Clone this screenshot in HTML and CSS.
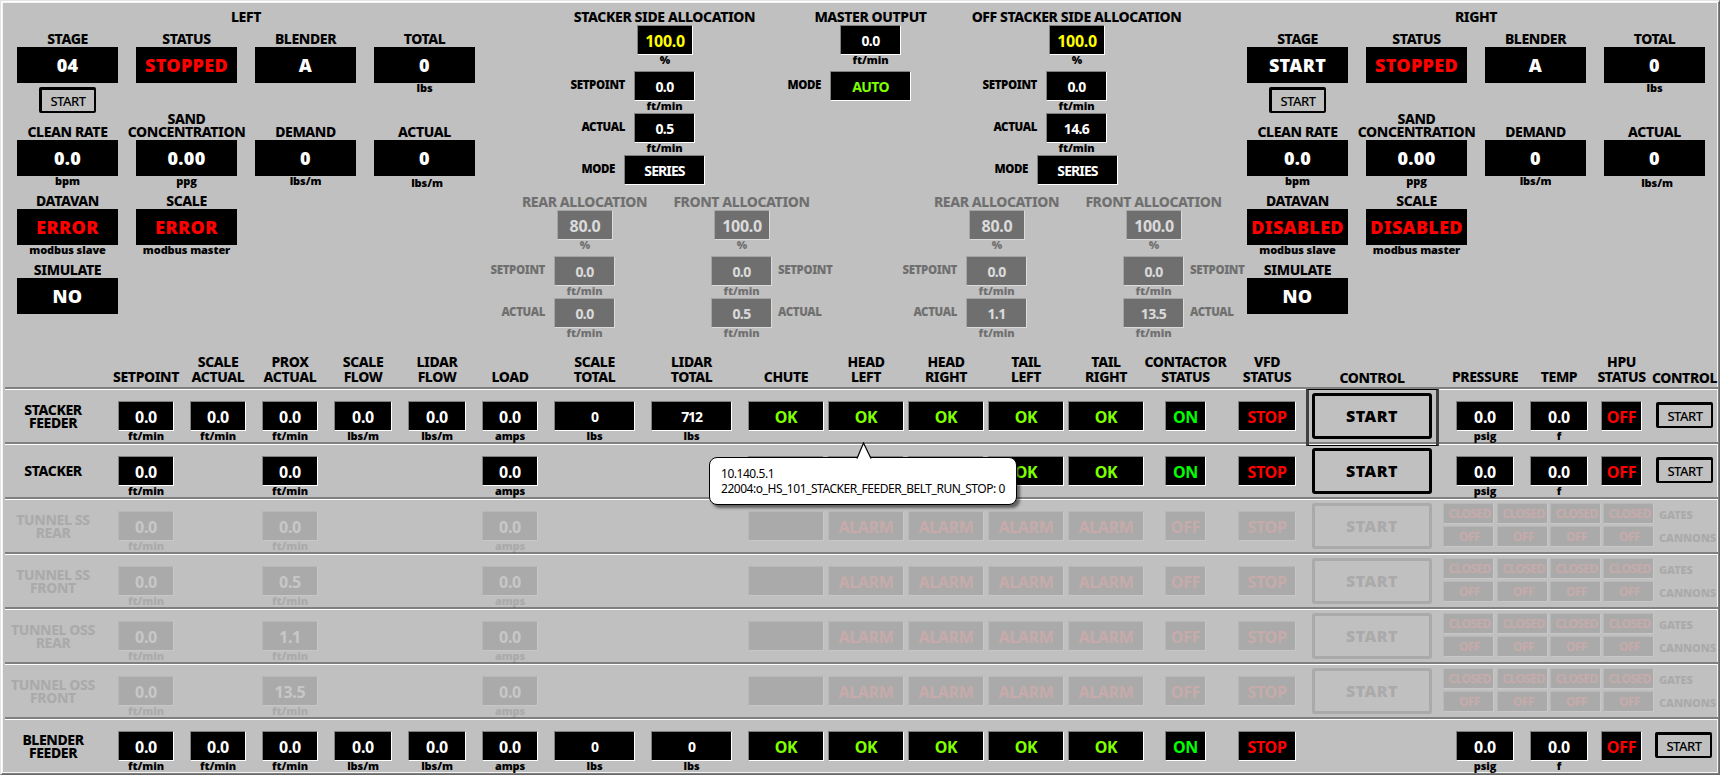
FILE: index.html
```
<!DOCTYPE html>
<html lang="en">
<head>
    <meta charset="UTF-8">
    <meta name="viewport" content="width=device-width, initial-scale=1.0">
    <title>Belt Overview</title>
    <link rel="stylesheet" href="styles.css">
</head>
<body>
    <div class="panel">
        <div class="overview">
            <section class="side">
                <h2 class="title">LEFT</h2>
                <div class="fields">
                    <div class="field">
                        <span class="label">STAGE</span><span class="big">04</span>
                        <button class="small-button">START</button>
                    </div>
                    <div class="field"><span class="label">STATUS</span><span class="big red">STOPPED</span></div>
                    <div class="field"><span class="label">BLENDER</span><span class="big">A</span></div>
                    <div class="field"><span class="label">TOTAL</span><span class="big">0</span><span class="unit">lbs</span></div>

                    <div class="field tall"><span class="label">CLEAN RATE</span><span class="big">0.0</span><span class="unit">bpm</span></div>
                    <div class="field tall"><span class="label">SAND<br>CONCENTRATION</span><span class="big">0.00</span><span class="unit">ppg</span></div>
                    <div class="field tall"><span class="label">DEMAND</span><span class="big">0</span><span class="unit">lbs/m</span></div>
                    <div class="field tall"><span class="label">ACTUAL</span><span class="big">0</span><span class="unit low">lbs/m</span></div>

                    <div class="field"><span class="label">DATAVAN</span><span class="big red">ERROR</span><span class="unit">modbus slave</span></div>
                    <div class="field"><span class="label">SCALE</span><span class="big red">ERROR</span><span class="unit">modbus master</span></div>

                    <div class="field first"><span class="label">SIMULATE</span><span class="big">NO</span></div>
                </div>
            </section>

            <section class="middle">
                <div class="outputs">
                    <div class="block">
                        <h2 class="title">STACKER SIDE ALLOCATION</h2>
                        <div class="line percent"><span class="box w56 yellow">100.0</span><span class="unit">%</span></div>
                        <div class="line"><span class="before">SETPOINT</span><span class="box w61">0.0</span><span class="unit">ft/min</span></div>
                        <div class="line"><span class="before">ACTUAL</span><span class="box w61">0.5</span><span class="unit">ft/min</span></div>
                        <div class="line"><span class="before">MODE</span><span class="box w81 mode">SERIES</span></div>
                    </div>
                    <div class="block">
                        <h2 class="title">MASTER OUTPUT</h2>
                        <div class="line master"><span class="box w61">0.0</span><span class="unit">ft/min</span></div>
                        <div class="line"><span class="before">MODE</span><span class="box w81 lime">AUTO</span></div>
                    </div>
                    <div class="block">
                        <h2 class="title">OFF STACKER SIDE ALLOCATION</h2>
                        <div class="line percent"><span class="box w56 yellow">100.0</span><span class="unit">%</span></div>
                        <div class="line"><span class="before">SETPOINT</span><span class="box w61">0.0</span><span class="unit">ft/min</span></div>
                        <div class="line"><span class="before">ACTUAL</span><span class="box w61">14.6</span><span class="unit">ft/min</span></div>
                        <div class="line shift"><span class="before">MODE</span><span class="box w81 mode">SERIES</span></div>
                    </div>
                </div>
                <div class="allocations">
                    <div class="block rear">
                        <h2 class="title">REAR ALLOCATION</h2>
                        <div class="line percent"><span class="box w56">80.0</span><span class="unit">%</span></div>
                        <div class="line"><span class="before">SETPOINT</span><span class="box w61">0.0</span><span class="unit">ft/min</span></div>
                        <div class="line"><span class="before">ACTUAL</span><span class="box w61">0.0</span><span class="unit">ft/min</span></div>
                    </div>
                    <div class="block front">
                        <h2 class="title">FRONT ALLOCATION</h2>
                        <div class="line percent"><span class="box w56">100.0</span><span class="unit">%</span></div>
                        <div class="line"><span class="box w61">0.0</span><span class="after">SETPOINT</span><span class="unit">ft/min</span></div>
                        <div class="line"><span class="box w61">0.5</span><span class="after">ACTUAL</span><span class="unit">ft/min</span></div>
                    </div>
                    <div class="block rear off">
                        <h2 class="title">REAR ALLOCATION</h2>
                        <div class="line percent"><span class="box w56">80.0</span><span class="unit">%</span></div>
                        <div class="line"><span class="before">SETPOINT</span><span class="box w61">0.0</span><span class="unit">ft/min</span></div>
                        <div class="line"><span class="before">ACTUAL</span><span class="box w61">1.1</span><span class="unit">ft/min</span></div>
                    </div>
                    <div class="block front">
                        <h2 class="title">FRONT ALLOCATION</h2>
                        <div class="line percent"><span class="box w56">100.0</span><span class="unit">%</span></div>
                        <div class="line"><span class="box w61">0.0</span><span class="after">SETPOINT</span><span class="unit">ft/min</span></div>
                        <div class="line"><span class="box w61">13.5</span><span class="after">ACTUAL</span><span class="unit">ft/min</span></div>
                    </div>
                </div>
            </section>

            <section class="side">
                <h2 class="title">RIGHT</h2>
                <div class="fields">
                    <div class="field">
                        <span class="label">STAGE</span><span class="big">START</span>
                        <button class="small-button">START</button>
                    </div>
                    <div class="field"><span class="label">STATUS</span><span class="big red">STOPPED</span></div>
                    <div class="field"><span class="label">BLENDER</span><span class="big">A</span></div>
                    <div class="field"><span class="label">TOTAL</span><span class="big">0</span><span class="unit">lbs</span></div>

                    <div class="field tall"><span class="label">CLEAN RATE</span><span class="big">0.0</span><span class="unit">bpm</span></div>
                    <div class="field tall"><span class="label">SAND<br>CONCENTRATION</span><span class="big">0.00</span><span class="unit">ppg</span></div>
                    <div class="field tall"><span class="label">DEMAND</span><span class="big">0</span><span class="unit">lbs/m</span></div>
                    <div class="field tall"><span class="label">ACTUAL</span><span class="big">0</span><span class="unit low">lbs/m</span></div>

                    <div class="field"><span class="label">DATAVAN</span><span class="big red">DISABLED</span><span class="unit">modbus slave</span></div>
                    <div class="field"><span class="label">SCALE</span><span class="big red">DISABLED</span><span class="unit">modbus master</span></div>

                    <div class="field first"><span class="label">SIMULATE</span><span class="big">NO</span></div>
                </div>
            </section>
        </div>

        <div class="row head">
            <span></span>
            <span class="cell w56">SETPOINT</span>
            <span class="cell w56">SCALE<br>ACTUAL</span>
            <span class="cell w56">PROX<br>ACTUAL</span>
            <span class="cell w58">SCALE<br>FLOW</span>
            <span class="cell w58">LIDAR<br>FLOW</span>
            <span class="cell w56">LOAD</span>
            <span class="cell w81">SCALE<br>TOTAL</span>
            <span class="cell w81">LIDAR<br>TOTAL</span>
            <span class="cell w76">CHUTE</span>
            <span class="cell w76">HEAD<br>LEFT</span>
            <span class="cell w76">HEAD<br>RIGHT</span>
            <span class="cell w76">TAIL<br>LEFT</span>
            <span class="cell w76">TAIL<br>RIGHT</span>
            <span class="cell w41">CONTACTOR<br>STATUS</span>
            <span class="cell w58">VFD<br>STATUS</span>
            <span class="cell w120 drop">CONTROL</span>
            <div class="hpu">
                <span class="cell w58">PRESSURE</span>
                <span class="cell w58">TEMP</span>
                <span class="cell w41">HPU<br>STATUS</span>
                <span class="cell w57 drop">CONTROL</span>
            </div>
        </div>
        <div id="belts"></div>

        <div class="tooltip">
            <svg class="tail" width="16" height="17" viewBox="0 0 16 17">
                <path d="M1 16.5 L7.5 1 L15 16.5" fill="#fff" stroke="#000" stroke-width="1.2"/>
            </svg>
            10.140.5.1<br>22004:o_HS_101_STACKER_FEEDER_BELT_RUN_STOP: 0
        </div>
    </div>

    <script src="script.js"></script>
</body>
</html>
```

FILE: styles.css
```
* {
    box-sizing: border-box;
}

body {
    margin: 0;
    background: #c0c0c0;
    color: #000;
    font-family: "Noto Sans", "Open Sans", sans-serif;
    font-weight: 700;
    overflow: hidden;
}

.panel {
    position: relative;
    width: 1720px;
    height: 775px;
    padding: 2px 1px 1px 2px;
    background: #c0c0c0;
    border: 1px solid #696969;
    border-top-color: #e3e3e3;
    border-left-color: #e3e3e3;
    box-shadow: inset 1px 1px #fff, inset -1px -1px #808080, inset 2px 2px #f4f4f4, inset -2px -2px #f4f4f4;
    overflow: hidden;
}

/* upper part */
.overview {
    display: flex;
    height: 337px;
    padding: 6px 0 0 14px;
}

.title {
    margin: 0;
    height: 16px;
    font-size: 14px;
    font-weight: 800;
    line-height: 16px;
    letter-spacing: -0.4px;
    text-align: center;
    white-space: nowrap;
}

.side {
    width: 458px;
}

.fields {
    display: grid;
    grid-template-columns: repeat(4, 101px);
    grid-template-rows: 82px 80px 69px 51px;
    column-gap: 18px;
    padding-top: 7px;
}

.field {
    display: flex;
    flex-direction: column;
    align-items: center;
}

.first {
    grid-column: 1;
}

.label {
    display: block;
    height: 15px;
    font-size: 14px;
    font-weight: 800;
    line-height: 13px;
    letter-spacing: -0.4px;
    text-align: center;
    white-space: nowrap;
}

.tall .label {
    height: 26px;
    padding-top: 11px;
}

.tall .label:has(br) {
    height: 28px;
    margin-top: -2px;
    padding-top: 0;
}

.big {
    width: 101px;
    height: 36px;
    background: #000;
    color: #fff;
    font-size: 18px;
    font-weight: 900;
    line-height: 37px;
    letter-spacing: 0.3px;
    text-align: center;
}

.unit {
    height: 11px;
    font-family: "Open Sans", "Noto Sans", sans-serif;
    font-size: 11px;
    font-weight: 800;
    line-height: 10px;
    letter-spacing: -0.1px;
    text-align: center;
    white-space: nowrap;
}

.unit.low {
    margin: 2px 0 0 5px;
}

.small-button {
    width: 57px;
    height: 26px;
    padding: 0;
    background: transparent;
    border: 2px solid #000;
    border-top-width: 3px;
    border-left-width: 3px;
    border-radius: 2px;
    font-family: inherit;
    font-size: 13px;
    font-weight: 500;
    letter-spacing: -0.5px;
    line-height: 20px;
    color: #000;
}

.field .small-button {
    margin-top: 4px;
}

/* allocation blocks */
.middle {
    width: 727px;
    margin: 0 15px 0 30px;
}

.outputs {
    display: grid;
    grid-template-columns: repeat(3, 206px);
    height: 185px;
    padding-left: 57px;
}

.allocations {
    display: flex;
    opacity: 0.417;
}

.rear {
    width: 160px;
}

.front {
    width: 154px;
}

.off {
    margin-left: 98px;
}

.block .title {
    display: flex;
    justify-content: center;
    margin-left: -1px;
}

.line {
    display: grid;
    grid-template-columns: minmax(0, 1fr) auto minmax(0, 1fr);
    grid-template-rows: 30px 11px;
    height: 42px;
    margin-left: -1px;
}

.shift {
    margin-left: 1px;
}

.percent,
.master {
    height: 46px;
}

.percent {
    margin-left: 0;
}

.line .box,
.line .unit {
    grid-column: 2;
}

.line .box {
    grid-row: 1;
    font-size: 14px;
    letter-spacing: -0.6px;
}

.line .mode {
    letter-spacing: -0.9px;
}

.percent .box {
    font-size: 16px;
    letter-spacing: -0.3px;
}

.line .unit {
    grid-row: 2;
}

.before,
.after {
    grid-row: 1;
    font-size: 11.5px;
    font-weight: 900;
    line-height: 28px;
    letter-spacing: -0.4px;
    white-space: nowrap;
}

.before {
    grid-column: 1;
    justify-self: end;
    margin-right: 9px;
}

.after {
    grid-column: 3;
    margin-left: 6px;
}

.box {
    display: block;
    height: 30px;
    background: #000;
    border: 1px solid #fff;
    border-top-color: #808080;
    border-left-color: #808080;
    color: #fff;
    font-size: 16px;
    line-height: 30px;
    letter-spacing: -0.3px;
    text-align: center;
    white-space: nowrap;
}

.w41 { width: 41px; }
.w56 { width: 56px; }
.w57 { width: 57px; }
.w58 { width: 58px; }
.w61 { width: 61px; }
.w76 { width: 76px; }
.w81 { width: 81px; }
.w120 { width: 120px; }

.red { color: #f00; }
.yellow { color: #ff0; }
.lime { color: #7fff00; }
.green { color: #0f0; }

/* belt rows */
.row {
    display: grid;
    grid-template-columns: 113px 72px 72px 72px 74px 74px 72px 97px 97px 80px 80px 80px 80px 97px 73px 74px 131px 1fr;
    height: 55px;
    margin-left: 2px;
    border-bottom: 1px solid #fff;
    box-shadow: inset 0 -2px #808080;
}

#belts .row:last-child {
    border-bottom: none;
    box-shadow: none;
}

.head {
    height: 50px;
    font-size: 14px;
    font-weight: 800;
    line-height: 15px;
    letter-spacing: -0.4px;
    text-align: center;
    white-space: nowrap;
}

.cell {
    display: flex;
    flex-direction: column;
    align-items: center;
}

.head .cell {
    height: 44px;
    flex-direction: row;
    align-items: flex-end;
    justify-content: center;
}

.head .drop {
    height: 45px;
}

.row .cell .box {
    margin-top: 11px;
}

.name {
    display: flex;
    align-items: center;
    justify-content: center;
    width: 96px;
    height: 51px;
    font-size: 14px;
    font-weight: 800;
    line-height: 13px;
    letter-spacing: -0.4px;
    text-align: center;
}

.cell .total {
    font-size: 14px;
    letter-spacing: -1.2px;
}

.faded {
    opacity: 0.11;
}

.start {
    position: relative;
    width: 120px;
    height: 46px;
    margin-top: 3px;
    padding: 0;
    background: transparent;
    border: 3px solid #000;
    border-radius: 3px;
    color: #000;
    font-family: inherit;
    font-size: 16px;
    font-weight: 900;
    letter-spacing: 0.5px;
    line-height: 40px;
}

/* keyboard focus frame around the button */
.start.focused::after {
    content: "";
    position: absolute;
    inset: -7px -10px -10px -9px;
    border: solid #404040;
    border-width: 1px 3px;
    border-top-color: #000;
    border-bottom-color: #000;
}

.hpu {
    display: grid;
    grid-template-columns: 74px 71px 55px 57px;
    padding-left: 13px;
}

.hpu .small-button {
    margin-top: 12px;
}

#belts .row:last-child .small-button {
    margin-left: -1px;
}

.gates {
    display: grid;
    grid-template-columns: 54px 53px 53px 56px auto;
    grid-template-rows: 23px 21px;
    padding-top: 3px;
}

.gate {
    width: 51px;
    height: 21px;
    padding-left: 2px;
    font-size: 12px;
    line-height: 19px;
    letter-spacing: -0.6px;
}

.gate-label {
    font-size: 11px;
    font-weight: 900;
    line-height: 23px;
    letter-spacing: -0.1px;
}

/* tag tooltip over the rows */
.tooltip {
    position: absolute;
    left: 708px;
    top: 456px;
    width: 308px;
    height: 48px;
    padding: 8px 0 0 11px;
    background: #fff;
    border: 1px solid #000;
    border-radius: 8px;
    box-shadow: 3px 3px 3px rgba(0, 0, 0, 0.5);
    font-size: 12px;
    font-weight: 400;
    line-height: 15px;
    letter-spacing: -0.46px;
    white-space: nowrap;
}

.tail {
    position: absolute;
    left: 146px;
    top: -16px;
}
```

FILE: script.js
```
const numberUnits = ['ft/min', 'ft/min', 'ft/min', 'lbs/m', 'lbs/m', 'amps', 'lbs', 'lbs'];
const numberWidths = [56, 56, 56, 58, 58, 56, 81, 81];

const belts = [
    { name: 'STACKER<br>FEEDER', numbers: ['0.0', '0.0', '0.0', '0.0', '0.0', '0.0', '0', '712'], control: true, focused: true },
    { name: 'STACKER', numbers: ['0.0', '', '0.0', '', '', '0.0', '', ''], control: true },
    { name: 'TUNNEL SS<br>REAR', numbers: ['0.0', '', '0.0', '', '', '0.0', '', ''], control: true, faded: true },
    { name: 'TUNNEL SS<br>FRONT', numbers: ['0.0', '', '0.5', '', '', '0.0', '', ''], control: true, faded: true },
    { name: 'TUNNEL OSS<br>REAR', numbers: ['0.0', '', '1.1', '', '', '0.0', '', ''], control: true, faded: true },
    { name: 'TUNNEL OSS<br>FRONT', numbers: ['0.0', '', '13.5', '', '', '0.0', '', ''], control: true, faded: true },
    { name: 'BLENDER<br>FEEDER', numbers: ['0.0', '0.0', '0.0', '0.0', '0.0', '0.0', '0', '0'] }
];

function cell(width, value, unit, cls, fade) {
    const unitHtml = unit ? `<span class="unit">${unit}</span>` : '';
    return `<div class="cell w${width}${fade}"><span class="box w${width} ${cls}">${value}</span>${unitHtml}</div>`;
}

function hpu() {
    return `<div class="hpu">
        ${cell(58, '0.0', 'psig', '', '')}
        ${cell(58, '0.0', 'f', '', '')}
        ${cell(41, 'OFF', '', 'red', '')}
        <button class="small-button">START</button>
    </div>`;
}

function gates() {
    const closed = '<span class="box gate red">CLOSED</span>'.repeat(4);
    const off = '<span class="box gate red">OFF</span>'.repeat(4);
    return `<div class="gates faded">
        ${closed}<span class="gate-label">GATES</span>
        ${off}<span class="gate-label">CANNONS</span>
    </div>`;
}

function renderBelt(belt) {
    const fade = belt.faded ? ' faded' : '';
    let html = `<div class="name${fade}"><span>${belt.name}</span></div>`;

    belt.numbers.forEach((value, i) => {
        html += value ? cell(numberWidths[i], value, numberUnits[i], i > 5 ? 'total' : '', fade) : '<div></div>';
    });

    // chute, head left/right, tail left/right
    for (let i = 0; i < 5; i++) {
        const value = belt.faded ? (i === 0 ? '' : 'ALARM') : 'OK';
        html += cell(76, value, '', belt.faded ? 'red' : 'lime', fade);
    }

    html += cell(41, belt.faded ? 'OFF' : 'ON', '', belt.faded ? 'red' : 'green', fade);
    html += cell(58, 'STOP', '', 'red', fade);
    html += belt.control
        ? `<button class="start${fade}${belt.focused ? ' focused' : ''}">START</button>`
        : '<div></div>';
    html += belt.faded ? gates() : hpu();

    return `<div class="row">${html}</div>`;
}

document.getElementById('belts').innerHTML = belts.map(renderBelt).join('');
```
